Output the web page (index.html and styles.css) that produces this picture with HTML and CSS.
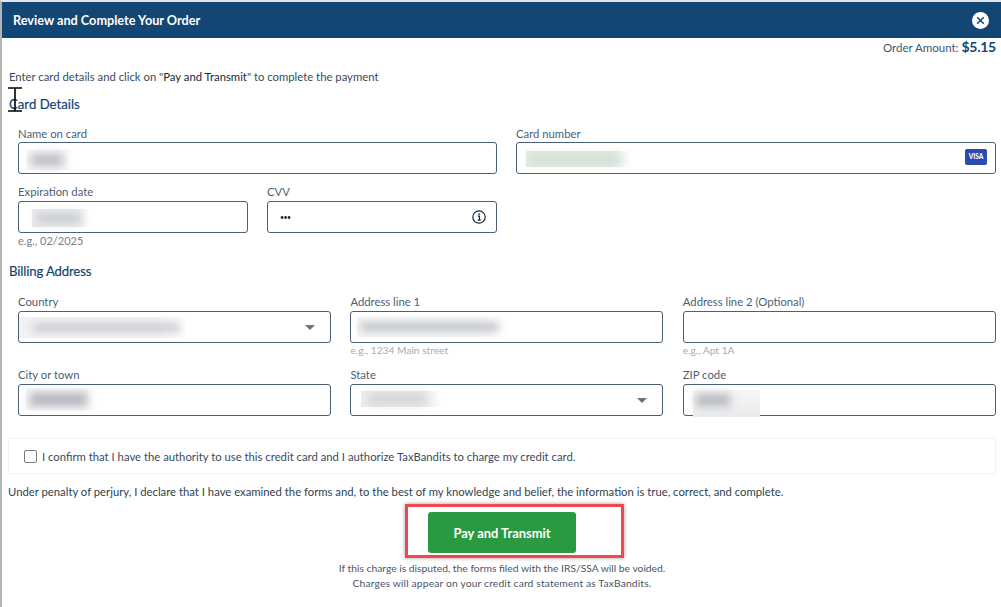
FILE: index.html
```html
<!DOCTYPE html>
<html lang="en">
<head>
<meta charset="utf-8">
<title>Review and Complete Your Order</title>
<link rel="stylesheet" href="styles.css">
</head>
<body>
<div class="modal">
  <header class="head">
    <h1>Review and Complete Your Order</h1>
    <span class="close"><svg viewBox="0 0 16 16" width="17" height="17"><circle cx="8" cy="8" r="8" fill="#fff"/><path d="M4.9 4.9l6.2 6.2M11.1 4.9l-6.2 6.2" stroke="#124675" stroke-width="1.4" fill="none"/></svg></span>
  </header>
  <div class="amount">Order Amount: <b>$5.15</b></div>
  <p class="intro">Enter card details and click on "<span class="dark">Pay and Transmit</span>" to complete the payment</p>
  <svg class="cursor" viewBox="0 0 14 25" width="14" height="25"><path d="M0 1h14M7 1v23M0 24h14" stroke="#000" stroke-width="1.6" fill="none"/></svg>
  <h2 class="sec first">Card Details</h2>
  <div class="grid two">
    <div class="field"><label>Name on card</label><div class="box"><i class="smear s-name"></i></div></div>
    <div class="field"><label>Card number</label><div class="box"><i class="smear s-card"></i><span class="visa">VISA</span></div></div>
  </div>
  <div class="grid exp">
    <div class="field"><label>Expiration date</label><div class="box"><i class="smear s-exp"></i></div><small>e.g., 02/2025</small></div>
    <div class="field"><label>CVV</label><div class="box"><span class="dots">•••</span><svg class="info" viewBox="0 0 14 14" width="14" height="14"><circle cx="7" cy="7" r="6.2" fill="none" stroke="#1c2b3a" stroke-width="1.2"/><circle cx="7" cy="4.1" r=".9" fill="#1c2b3a"/><path d="M5.8 6.2H7.4V10M5.7 10.2H8.7" fill="none" stroke="#1c2b3a" stroke-width="1.2"/></svg></div></div>
  </div>
  <h2 class="sec billing">Billing Address</h2>
  <div class="grid three">
    <div class="field"><label>Country</label><div class="box"><i class="smear s-country"></i><span class="caret"></span></div></div>
    <div class="field"><label>Address line 1</label><div class="box"><i class="smear s-addr"></i></div><small class="light">e.g., 1234 Main street</small></div>
    <div class="field"><label>Address line 2 (Optional)</label><div class="box"></div><small class="light">e.g., Apt 1A</small></div>
  </div>
  <div class="grid three row2">
    <div class="field"><label>City or town</label><div class="box"><i class="smear s-city"></i></div></div>
    <div class="field"><label>State</label><div class="box"><i class="smear s-state"></i><span class="caret"></span></div></div>
    <div class="field"><label>ZIP code</label><div class="box"><i class="smear s-zip"></i></div></div>
  </div>
  <div class="confirm"><span class="check"></span><span>I confirm that I have the authority to use this credit card and I authorize TaxBandits to charge my credit card.</span></div>
  <p class="perjury">Under penalty of perjury, I declare that I have examined the forms and, to the best of my knowledge and belief, the information is true, correct, and complete.</p>
  <div class="cta"><div class="mark"><button class="pay" type="button">Pay and Transmit</button></div></div>
  <p class="note">If this charge is disputed, the forms filed with the IRS/SSA will be voided.</p>
  <p class="note n2">Charges will appear on your credit card statement as TaxBandits.</p>
</div>
</body>
</html>
```
FILE: styles.css
```css
* { box-sizing: border-box; }
html, body { margin: 0; height: 100%; background: #fff; overflow: hidden; }
body { font-family: "Lato", "Open Sans", sans-serif; color: #2d4560; font-size: 11.3px; }
.modal { position: relative; height: 607px; border-left: 2px solid #b4b4b4; border-top: 2px solid #e4e6e8; padding-right: 5px; }
.head { height: 36px; margin-right: -5px; background: #124675; display: flex; align-items: center; justify-content: space-between; padding: 0 12px 0 11px; }
.head h1 { margin: 0; font-size: 12.7px; font-weight: 700; color: #fff; }
.close { display: flex; }
.amount { height: 17px; text-align: right; line-height: 17px; font-size: 11.5px; color: #3d5673; }
.amount b { font-size: 14px; letter-spacing: -.25px; color: #124675; font-weight: 700; }
.intro { margin: 14px 0 0 7px; font-size: 11.3px; line-height: 16px; color: #3a4a5c; }
.dark { color: #17263a; }
.cursor { position: absolute; left: 6px; top: 85px; }
.sec { margin: 10px 0 0 7px; font-size: 13.2px; line-height: 18px; font-weight: 400; color: #124675; -webkit-text-stroke: .2px #124675; }
.first { margin-bottom: 12px; }
.billing { margin-top: 15px; letter-spacing: -.15px; }
.grid { display: grid; margin-left: 16px; }
.two { grid-template-columns: 479px 480px; column-gap: 19px; }
.exp { grid-template-columns: 230px 230px; column-gap: 19px; margin-top: 10px; }
.three { grid-template-columns: 313px 313px 313px; column-gap: 19.4px; }
.sec + .three { margin-top: 13px; }
.row2 { margin-top: 9px; height: 50px; }
.field { display: flex; flex-direction: column; min-width: 0; }
.field label { height: 17px; line-height: 17px; font-size: 11.3px; color: #4a5f78; }
.box { position: relative; height: 32px; border: 1px solid #4a5f78; border-radius: 3px; background: #fff; }
.field small { margin-top: 2px; height: 13px; line-height: 13px; font-size: 11px; color: #74808d; }
.field small.light { margin-top: 1px; font-size: 10.2px; color: #a6adb5; }
.exp .field label { line-height: 15px; }
.exp .field small { margin-top: 1px; }
.three .field label { height: 18px; }
.smear { position: absolute; display: block; background: linear-gradient(to right, var(--wash) 82%, rgba(255,255,255,0)); }
.smear::after { content: ""; position: absolute; top: var(--iy); bottom: var(--iy); left: var(--ix); right: var(--ir); background: var(--ink); filter: blur(4px); }
.s-name { left: 8px; top: 7px; width: 46px; height: 20px; --wash: #f5f5f7; --ink: #bdc0c4; --iy: 4px; --ix: 4px; --ir: 10px; }
.s-card { left: 9px; top: 8px; width: 106px; height: 16px; --wash: #e4ebe5; --ink: #d3dfd4; --iy: 3px; --ix: 3px; --ir: 12px; }
.s-exp { left: 13px; top: 7px; width: 58px; height: 18px; --wash: #ebecef; --ink: #c9ccd0; --iy: 4px; --ix: 4px; --ir: 10px; }
.s-country { left: 0; top: 5px; width: 169px; height: 21px; --wash: #f1f2f4; --ink: #c0c3c8; --iy: 7px; --ix: 14px; --ir: 8px; }
.s-addr { left: 6px; top: 5px; width: 146px; height: 20px; --wash: #f5f6f7; --ink: #babdc2; --iy: 6px; --ix: 4px; --ir: 4px; }
.s-city { left: 7px; top: 4px; width: 71px; height: 21px; --wash: #f3f4f5; --ink: #b4b7bc; --iy: 4px; --ix: 4px; --ir: 10px; }
.s-state { left: 10px; top: 6px; width: 80px; height: 16px; --wash: #eaebed; --ink: #d2d4d8; --iy: 3px; --ix: 8px; --ir: 16px; }
.s-zip { left: 9px; top: 5px; width: 67px; height: 27px; background: linear-gradient(#f6f6f7, #e9eaec); --ink: #b5b8bd; --iy: 4px; --ix: 3px; --ir: 30px; }
.s-zip::after { bottom: 11px; }
.visa { position: absolute; right: 8px; top: 6px; width: 22px; height: 16px; border-radius: 2px; background: #2a4ab0; color: #fff; font-size: 6.5px; font-weight: 900; line-height: 16px; text-align: center; }
.dots { position: absolute; left: 12px; top: 9px; font-size: 7px; line-height: 12px; color: #222; letter-spacing: -.5px; }
.info { position: absolute; right: 10px; top: 8px; }
.caret { position: absolute; right: 15px; top: 13px; border: 5px solid transparent; border-top: 5px solid #6b7380; border-bottom: 0; }
.confirm { display: flex; align-items: center; gap: 5px; height: 36px; margin: 22px 0 0 6px; padding-left: 15px; border: 1px solid #eef0f2; border-radius: 3px; color: #3a4a5c; font-size: 11.3px; }
.check { width: 13px; height: 13px; border: 1.5px solid #777d86; border-radius: 2px; }
.perjury { margin: 11px 0 0 6px; font-size: 11.3px; line-height: 14px; color: #2f3f52; white-space: nowrap; }
.cta { display: flex; justify-content: center; margin-top: 5px; padding-left: 31px; }
.mark { padding: 5px 45px 2px 20px; border: 3px solid #f0474e; box-shadow: 0 0 4px rgba(0,0,0,.4); display: flex; }
.pay { width: 148px; height: 41px; border: 0; border-radius: 3px; background: #2a9a41; color: #fff; font: 700 12.9px "Lato", sans-serif; }
.note { margin: 4px 0 0; text-align: center; padding-left: 6px; font-size: 10.3px; line-height: 13px; color: #4a5566; }
.n2 { margin-top: 2px; letter-spacing: .15px; }
```
